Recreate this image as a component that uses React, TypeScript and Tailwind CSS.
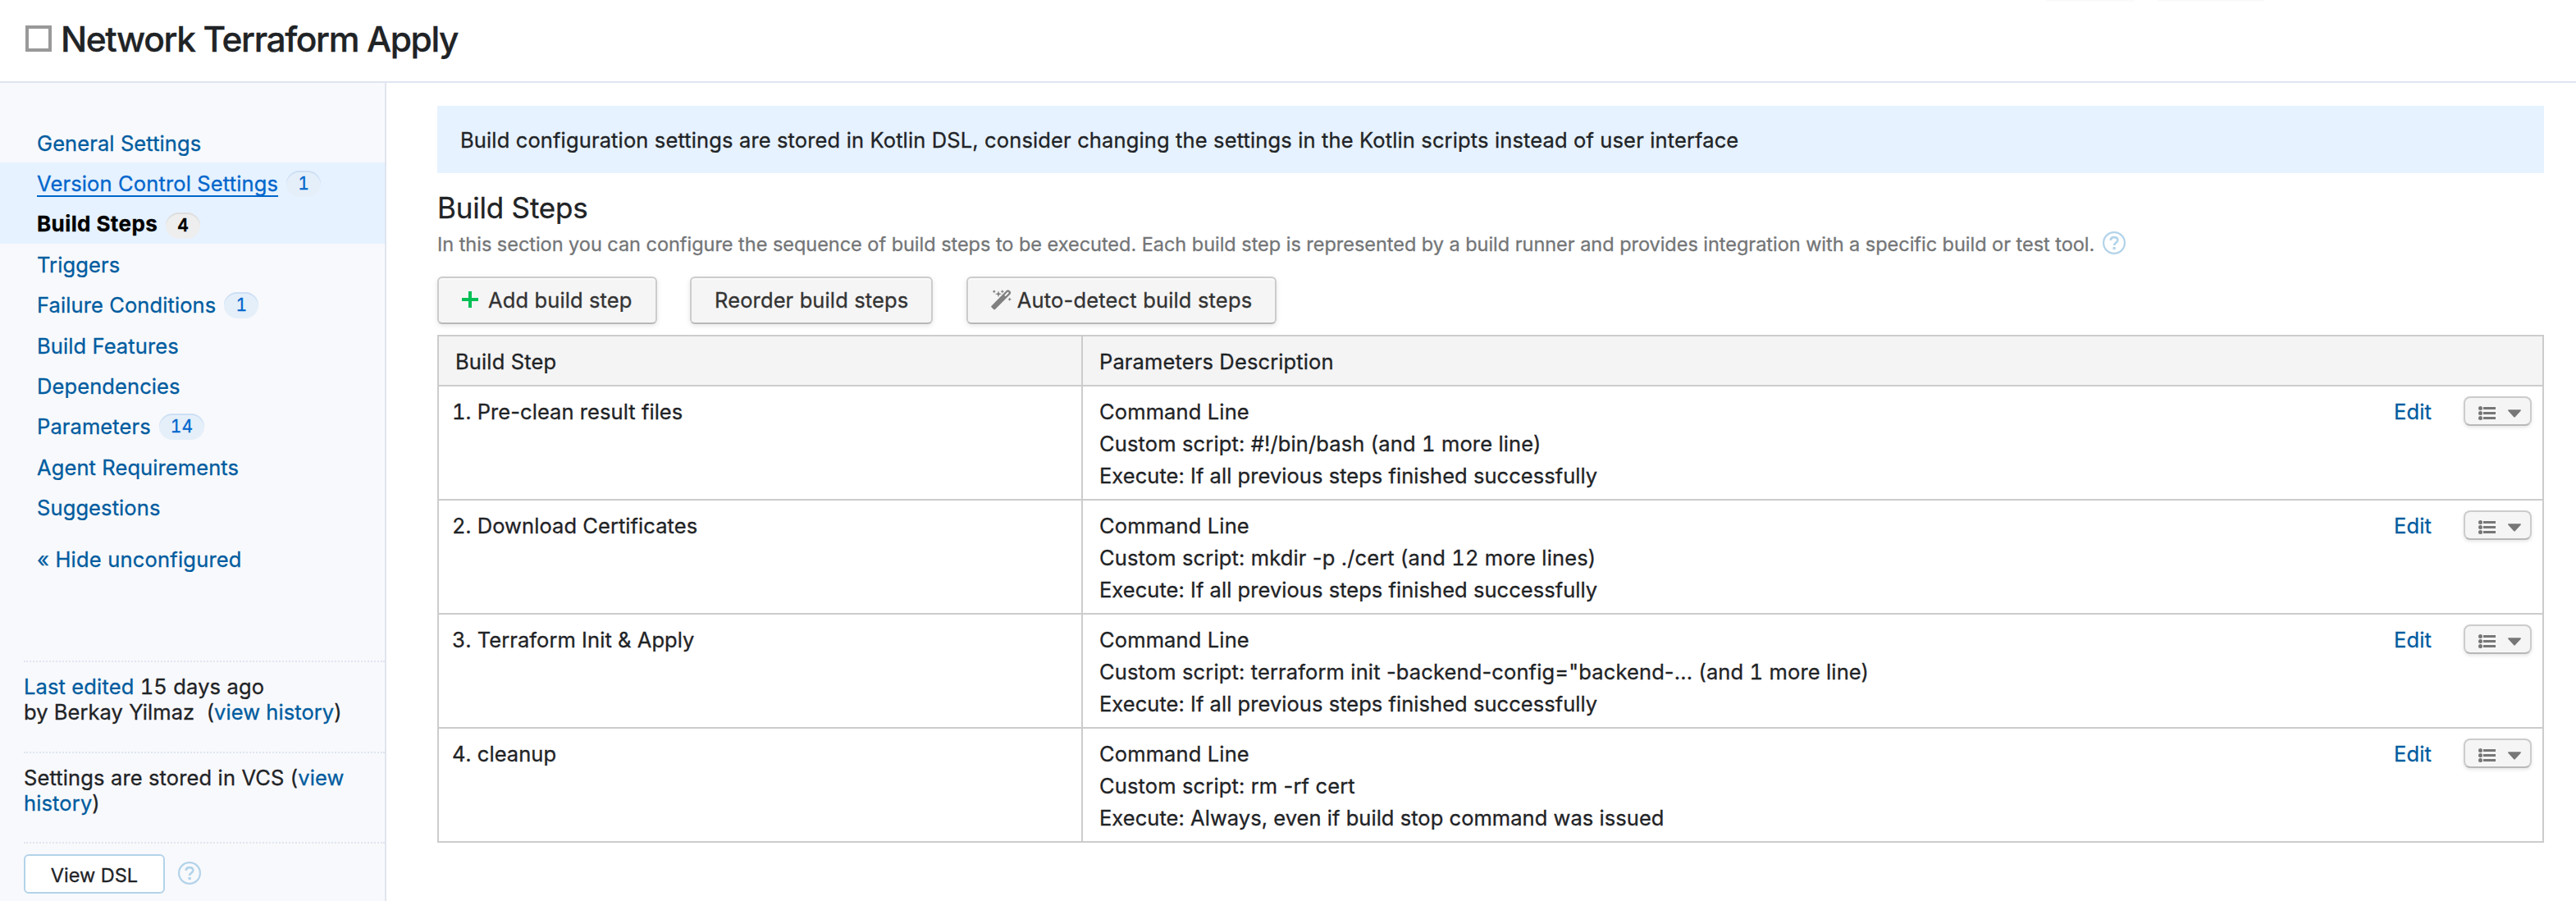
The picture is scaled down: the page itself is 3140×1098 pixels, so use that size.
import type { ReactNode } from "react";

type NavItem = { label: string; count?: number; state?: "hover" | "active" };

const NAV: NavItem[] = [
  { label: "General Settings" },
  { label: "Version Control Settings", count: 1, state: "hover" },
  { label: "Build Steps", count: 4, state: "active" },
  { label: "Triggers" },
  { label: "Failure Conditions", count: 1 },
  { label: "Build Features" },
  { label: "Dependencies" },
  { label: "Parameters", count: 14 },
  { label: "Agent Requirements" },
  { label: "Suggestions" },
];

const STEPS = [
  {
    name: "Pre-clean result files",
    script: "#!/bin/bash (and 1 more line)",
    execute: "If all previous steps finished successfully",
  },
  {
    name: "Download Certificates",
    script: "mkdir -p ./cert (and 12 more lines)",
    execute: "If all previous steps finished successfully",
  },
  {
    name: "Terraform Init & Apply",
    script: 'terraform init -backend-config="backend-... (and 1 more line)',
    execute: "If all previous steps finished successfully",
  },
  {
    name: "cleanup",
    script: "rm -rf cert",
    execute: "Always, even if build stop command was issued",
  },
];

function HelpIcon() {
  return (
    <svg className="size-7 shrink-0" viewBox="0 0 28 28" fill="none" stroke="#b3d3ea">
      <circle cx="14" cy="14" r="12.9" strokeWidth="2.2" />
      <path d="M9.7 10.9C9.9 8.4 11.6 7.2 14 7.2c2.5 0 4.3 1.3 4.3 3.5 0 3-4.2 3.1-4.2 6.3" strokeWidth="2.7" />
      <path d="M14.1 18.9v3.2" strokeWidth="3.3" />
    </svg>
  );
}

function PlusIcon() {
  return (
    <svg className="size-5 shrink-0" viewBox="0 0 20 20" fill="#00bf55">
      <path d="M8 0h4v8h8v4h-8v8H8v-8H0V8h8z" />
    </svg>
  );
}

function WandIcon() {
  return (
    <svg className="size-[25px] shrink-0" viewBox="0 0 25 25" fill="#808080">
      <path
        fillRule="evenodd"
        d="M18.9 1.1c1-1 2.4-1 3.4-.2l1.2 1.2c.9 1 .9 2.3 0 3.3L5 24.1c-.6.6-1.2.6-1.8 0L.6 21.5c-.6-.6-.6-1.2 0-1.8zM20 2.9l-3.4 3.5c-.5.6.9 1.9 1.5 1.4l3.4-3.5c.7-.7-.8-2.2-1.5-1.4z"
      />
      <path d="M9 1.2l1 3 3 1-3 1-1 3-1-3-3-1 3-1z" />
      <path d="M3.8.1l.7 1.5 1.5.7-1.5.7-.7 1.5-.7-1.5-1.5-.7 1.5-.7zM13.8.1l.7 1.5 1.5.7-1.5.7-.7 1.5-.7-1.5-1.5-.7 1.5-.7zM22.7 9.4l.7 1.6 1.6.7-1.6.7-.7 1.6-.7-1.6-1.6-.7 1.6-.7z" />
    </svg>
  );
}

function ActionsButton() {
  return (
    <button className="flex h-9 w-[83px] items-center justify-between rounded-lg border-2 border-[#cccccc] border-b-[#b8b8b8] bg-[#f5f5f5] pr-[11px] pl-4 shadow-[0_2px_4px_rgba(0,0,0,0.1)]">
      <svg className="mt-1 h-[17px] w-[21px]" viewBox="0 0 21 17" fill="#777777">
        <circle cx="2.5" cy="2.5" r="2.5" />
        <circle cx="2.5" cy="8.5" r="2.5" />
        <circle cx="2.5" cy="14.5" r="2.5" />
        <path d="M6 1h15v3H6zM6 7h15v3H6zM6 13h15v3H6z" />
      </svg>
      <svg className="mt-[5px] h-[10px] w-4" viewBox="0 0 16 10" fill="#777777">
        <path d="M1 .3h14c1 0 1.2.8.6 1.4L9 8.9c-.6.7-1.4.7-2 0L.4 1.7C-.2 1.1 0 .3 1 .3z" />
      </svg>
    </button>
  );
}

function ToolButton({ children }: { children: ReactNode }) {
  return (
    <button className="flex h-[58px] items-center rounded-md border-2 border-[#cccccc] border-b-[#b8b8b8] bg-[#f5f5f5] px-7 pb-0.5 tracking-[0.12px] text-[#333333] shadow-[inset_0_2px_0_#fafafa,0_2px_6px_rgba(0,0,0,0.1)]">
      {children}
    </button>
  );
}

function Link({ children }: { children: ReactNode }) {
  return <a className="text-[#005c9f]">{children}</a>;
}

/* Renders text with fixed-width digits while leaving punctuation proportional. */
function WithDigits({ text }: { text: string }) {
  return (
    <>
      {text.split(/(\d+)/).map((part, i) =>
        i % 2 ? (
          <span key={i} className="tabular-nums">
            {part}
          </span>
        ) : (
          part
        ),
      )}
    </>
  );
}

function NavRow({ label, count, state }: NavItem) {
  const active = state === "active";
  const hover = state === "hover";
  return (
    <li className={state ? "flex h-[49.4px] items-center bg-[#e6f2ff] pl-[45px]" : "flex h-[49.4px] items-center pl-[45px]"}>
      <a
        className={
          active
            ? "mt-0.5 text-[26px] font-bold tracking-[0.4px] text-black"
            : hover
              ? "mt-0.5 tracking-[0.14px] text-[#0066cc] underline decoration-2 underline-offset-[5px]"
              : "mt-0.5 tracking-[0.1px] text-[#005c9f]"
        }
      >
        {label}
      </a>
      {count !== undefined && (
        <span
          className={
            active
              ? "mt-1.5 ml-2.5 flex h-8 min-w-[42px] items-center justify-center rounded-full bg-[#eeeeee] px-3.5 text-[21px] font-semibold text-black tabular-nums shadow-[inset_0_2px_0_#dddddd]"
              : "mt-0.5 ml-2.5 flex h-8 min-w-[42px] items-center justify-center rounded-full bg-[#e5effa] px-3.5 text-[21px] text-[#0066cc] tabular-nums shadow-[inset_0_2px_0_#cddff5]"
          }
        >
          {count}
        </span>
      )}
    </li>
  );
}

export default function App() {
  return (
    <div className="flex h-[1098px] w-[3140px] flex-col overflow-hidden bg-white font-[Inter,'Liberation_Sans',sans-serif] text-[25.5px] leading-[31px] tracking-[0.13px] text-[#1f2326] [-webkit-text-stroke:0.3px]">
      <header className="flex h-[101px] shrink-0 justify-between border-b-2 border-[#dfe5f0] pr-[380px] pl-[31px]">
        <div className="flex h-[94px] items-center gap-[11px]">
          <span className="size-8 border-4 border-[#999999]" />
          <h1 className="pt-0.5 text-[42.5px] leading-none font-medium tracking-[-1.4px]">Network Terraform Apply</h1>
        </div>
        <div className="flex gap-7">
          <span className="h-0.5 w-[108px] bg-[#fafafa]" />
          <span className="h-0.5 w-[130px] bg-[#fafafa]" />
        </div>
      </header>

      <div className="flex min-h-0 flex-1">
        <aside className="flex w-[471px] shrink-0 flex-col border-r-2 border-[#dfe5f0] bg-[#f8f9fc] pt-[47.5px]">
          <ul>
            {NAV.map((item) => (
              <NavRow key={item.label} {...item} />
            ))}
          </ul>
          <div className="mt-[24px] pl-[45px] tracking-[0.2px]">
            <Link>« Hide unconfigured</Link>
          </div>

          <div className="mt-[108px] ml-[29px] flex h-[111px] shrink-0 flex-col border-t-2 border-dotted border-[#dfe5f0] pt-[14px]">
            <div>
              <Link>Last edited</Link> <span className="tabular-nums">15</span> days ago
            </div>
            <div className="tracking-[0.06px] whitespace-pre">
              {"by Berkay Yilmaz  ("}
              <Link>view history</Link>)
            </div>
          </div>
          <div className="ml-[29px] h-[110px] shrink-0 border-t-2 border-dotted border-[#dfe5f0] pt-[14px]">
            Settings are stored in VCS (<Link>view
            <br />
            history</Link>)
          </div>
          <div className="ml-[29px] flex shrink-0 items-start gap-4 border-t-2 border-dotted border-[#dfe5f0] pt-[13px]">
            <button className="h-12 w-[172px] rounded-md border-2 border-[#b3d3ea] bg-white pt-0.5 text-[23.5px] tracking-normal">
              View DSL
            </button>
            <span className="mt-[9px]">
              <HelpIcon />
            </span>
          </div>
        </aside>

        <main className="flex-1 pt-7 pr-[39px] pl-[62px]">
          <div className="flex h-[82px] items-center bg-[#e6f2ff] pl-7 tracking-[0.135px]">
            Build configuration settings are stored in Kotlin DSL, consider changing the settings in the Kotlin scripts
            instead of user interface
          </div>
          <h2 className="mt-5 text-[35px] leading-[44px] tracking-[-0.2px]">Build Steps</h2>
          <div className="mt-[7px] flex h-7 items-center gap-2.5 text-[23.5px] tracking-[-0.03px] text-[#737577]">
            <p className="pt-0.5">
              In this section you can configure the sequence of build steps to be executed. Each build step is
              represented by a build runner and provides integration with a specific build or test tool.
            </p>
            <HelpIcon />
          </div>

          <div className="mt-[27px] flex gap-[40.5px]">
            <ToolButton>
              <PlusIcon />
              <span className="ml-3">Add build step</span>
            </ToolButton>
            <ToolButton>Reorder build steps</ToolButton>
            <ToolButton>
              <WandIcon />
              <span className="ml-[7px] tracking-[0.17px]">Auto-detect build steps</span>
            </ToolButton>
          </div>

          <div className="mt-[13px] border-2 border-[#cccccc]">
            <div className="flex h-[59px] items-center bg-[#f4f4f4]">
              <div className="w-[783px] pt-0.5 pl-5">Build Step</div>
              <div className="flex h-full flex-1 items-center border-l-2 border-[#cccccc] pt-0.5 pl-5">
                Parameters Description
              </div>
            </div>
            {STEPS.map((step, i) => (
              <div key={step.name} className="flex h-[139px] border-t-2 border-[#cccccc] leading-[39px]">
                <div className="w-[783px] pt-[11px] pl-4 tracking-[0.06px]">
                  <span className="tabular-nums">{i + 1}.</span> {step.name}
                </div>
                <div className="flex-1 border-l-2 border-[#cccccc] pt-[11px] pl-5">
                  <div>Command Line</div>
                  <div>
                    Custom script: <WithDigits text={step.script} />
                  </div>
                  <div className="tracking-[0.04px]">Execute: {step.execute}</div>
                </div>
                <div className="flex items-start gap-[39px] pt-3 pr-[13px]">
                  <span className="-mt-px">
                    <Link>Edit</Link>
                  </span>
                  <ActionsButton />
                </div>
              </div>
            ))}
          </div>
        </main>
      </div>
    </div>
  );
}
